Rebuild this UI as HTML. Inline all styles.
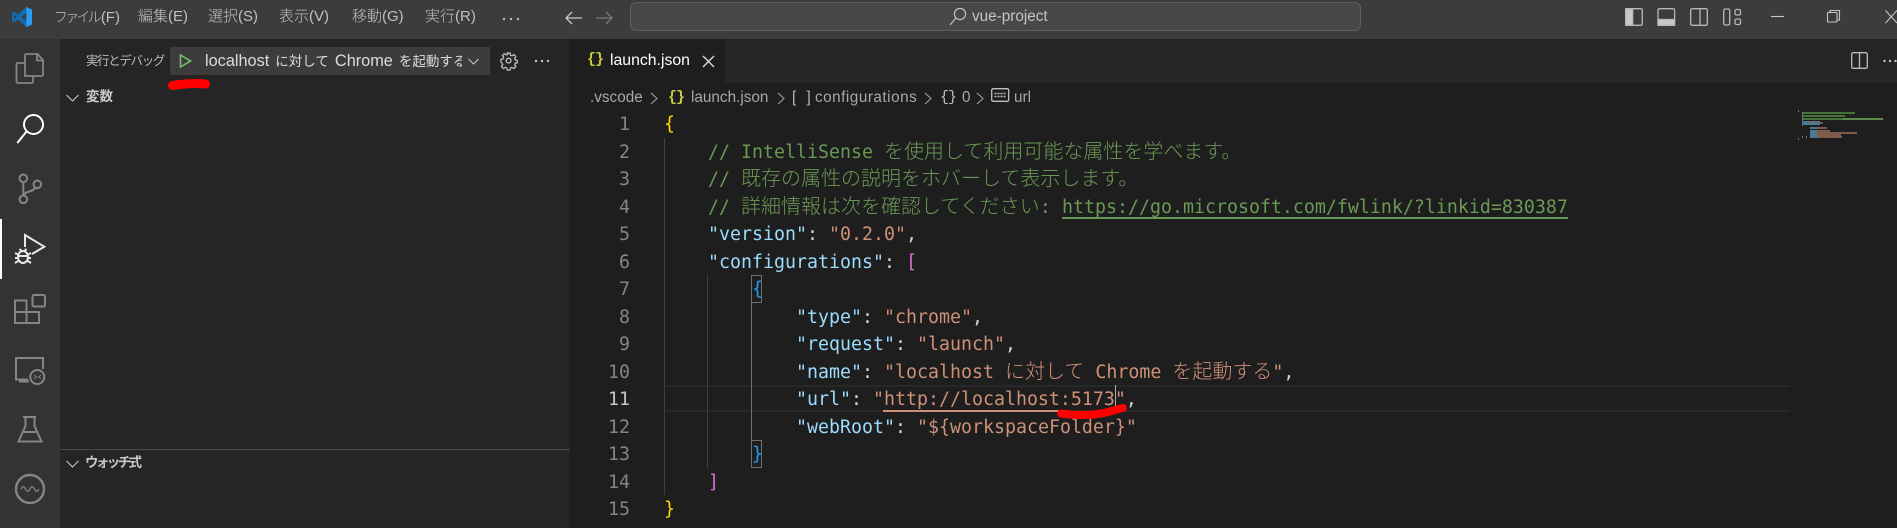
<!DOCTYPE html>
<html lang="ja"><head><meta charset="utf-8"><title>vue-project</title>
<style>
html,body{margin:0;padding:0;background:#1e1e1e}
#app{position:relative;width:1897px;height:528px;overflow:hidden;background:#1e1e1e;font-family:"Liberation Sans","Noto Sans CJK JP",sans-serif;color:#ccc}
.a{position:absolute;white-space:pre}
.ui{font-size:15.3px;line-height:22px;top:87px;color:#a8a8a8}
.m{font-size:15px;line-height:22px;top:6px;color:#c0c0c0;font-weight:300}
.ln{position:absolute;left:590px;width:40px;text-align:right;font:18.27px/27.5px "DejaVu Sans Mono",monospace;color:#858585}
.c{position:absolute;white-space:pre;font:18.27px/27.5px "DejaVu Sans Mono","Noto Sans CJK JP",monospace;color:#d4d4d4}
.c i{font-style:normal;font-family:"Noto Sans CJK JP",sans-serif;font-size:20px;font-weight:300;line-height:20px}
.k{color:#9cdcfe}.s{color:#ce9178}.g{color:#6a9955}.y{color:#ffd700}.p{color:#da70d6}.b{color:#179fff}
.r{position:absolute;background:#000}
svg{position:absolute;overflow:visible}
</style></head><body><div id="app">

<div class="r" style="left:0;top:0;width:1897px;height:39px;background:#3c3c3c"></div>
<div class="r" style="left:0;top:39px;width:60px;height:489px;background:#333"></div>
<div class="r" style="left:60px;top:39px;width:510px;height:489px;background:#252526"></div>
<div class="r" style="left:570px;top:39px;width:1327px;height:44px;background:#252526"></div>
<div class="r" style="left:570px;top:39px;width:155px;height:44px;background:#1e1e1e"></div>
<div class="r" style="left:0;top:219px;width:2px;height:60px;background:#fff"></div>

<!-- title bar -->
<svg style="left:12px;top:7px" width="20" height="20" viewBox="0 0 20 20">
<path fill="#0f6fb4" fill-rule="evenodd" d="M14.3 0 6 7.500 2 4.600 0 5.700v8.600l2 1.100 4-2.900 8.300 7.500 5.700-2.500V2.500zM14.500 6 9 10l5.500 4zM2 7.500v5L4.600 10z"/>
<path fill="#2a9df0" d="M14.300 0 20 2.500v15L14.300 20z"/>
</svg>
<div class="a m" style="left:54px"><span style="font-size:14px;letter-spacing:-2.800px">ファイル</span><span style="margin-left:2px">(F)</span></div>
<div class="a m" style="left:138px">編集(E)</div>
<div class="a m" style="left:208px">選択(S)</div>
<div class="a m" style="left:279px">表示(V)</div>
<div class="a m" style="left:352px">移動(G)</div>
<div class="a m" style="left:425px">実行(R)</div>
<svg style="left:502px;top:17px" width="18" height="4"><circle cx="2" cy="2" r="1.200" fill="#bbb"/><circle cx="9" cy="2" r="1.200" fill="#bbb"/><circle cx="16" cy="2" r="1.200" fill="#bbb"/></svg>
<svg style="left:564px;top:10px" width="50" height="16" fill="none" stroke-width="1.300"><path stroke="#c8c8c8" d="M18 8H2M8 2 2 8l6 6"/><path stroke="#7a7a7a" d="M32 8h16M42 2l6 6-6 6"/></svg>
<div class="r" style="left:630px;top:2px;width:731px;height:29px;box-sizing:border-box;background:#484848;border:1px solid #5e5e5e;border-radius:6px"></div>
<svg style="left:949px;top:7px" width="18" height="19" fill="none" stroke="#c0c0c0" stroke-width="1.200"><circle cx="11" cy="7" r="5.600"/><path d="M7 11 1 18"/></svg>
<div class="a" style="left:972px;top:6px;font-size:15.300px;line-height:21px;color:#c4c4c4">vue-project</div>

<svg style="left:1625px;top:8px" width="120" height="18" fill="none" stroke="#b8b8b8" stroke-width="1.300">
<rect x=".7" y=".7" width="16.600" height="16.600" rx="1.500"/><rect x=".7" y=".7" width="7" height="16.600" fill="#c8c8c8"/>
<rect x="33" y=".7" width="16.600" height="16.600" rx="1.500"/><rect x="33" y="11.500" width="16.600" height="5.800" fill="#c8c8c8"/>
<rect x="65.700" y=".7" width="16.600" height="16.600" rx="1.500"/><path d="M75 1v16"/>
<rect x="98.700" y="1" width="6" height="16" rx="1.500"/><rect x="110" y="1.500" width="5.500" height="5.500" rx="1.500"/><rect x="110" y="11" width="5.500" height="5.500" rx="1.500"/>
</svg>
<svg style="left:1771px;top:9px" width="126" height="16" fill="none" stroke="#c8c8c8" stroke-width="1.100">
<path d="M0 7.500h13"/>
<rect x="56.500" y="3.500" width="9.500" height="9.500" rx="1"/><path d="M59 3V1.500h9.500V11H66"/>
<path d="M114.500 1.500 126 14M126 1.500 114.500 14"/>
</svg>

<!-- activity bar -->
<svg style="left:0;top:39px" width="60" height="489" fill="none" stroke="#858585" stroke-width="1.800">
<path d="M24.500 24H17.500L16.500 25V43L17.500 44H32L33 43V37.500"/>
<path d="M25 37V16l1-1h11.500L43 21v15l-1 1z"/><path d="M37 15.500v6H43"/>
<circle cx="33.500" cy="85.500" r="9.500" stroke="#fff" stroke-width="2"/><path d="M26.500 92.500 17.300 104" stroke="#fff" stroke-width="2"/>
<g stroke-width="2"><circle cx="23.300" cy="139.300" r="3.800"/><circle cx="23.300" cy="160.300" r="3.800"/><circle cx="37.300" cy="145.300" r="3.800"/><path d="M23.300 143.300v13.200M35 148.800c-1 4-9 3-11.500 7"/></g>
<g stroke="#e8e8e8" stroke-width="2"><path d="M25 208V196L44.300 207.700 32 215"/>
<ellipse cx="23" cy="218" rx="5" ry="6" fill="#333"/><path d="M18 217h10M15 214l4 2M31 214l-4 2M15 219h3M31 219h-3M15 224l4-2.500M31 224l-4-2.500M19.500 210l2 2M26.500 210l-2 2"/></g>
<g stroke-width="2" transform="translate(0,-39)"><path d="M15 300.500h11.500V323H15zM15 312h24v11H26.500"/><rect x="32.500" y="295" width="12.500" height="11.500" rx="1.500"/></g>
<g stroke-width="2" transform="translate(0,-39)"><path d="M28 379.500H16V358h27v11"/><path d="M19 381.500h10"/><circle cx="37.300" cy="377" r="7"/><path d="M34 375l2.500 2-2.500 2M41 375l-2.500 2 2.500 2" stroke-width="1"/></g>
<g stroke-width="2" transform="translate(0,-39)"><path d="M23 417h13M25.500 417v9l-7 15.500h23l-7-15.500v-9M22 432h16"/></g>
<g stroke-width="2" transform="translate(0,-39)"><circle cx="30" cy="489" r="14" stroke-width="2.400"/><path d="M21 489c1.500-3 3-3 4.500 0s3 3 4.500 0 3-3 4.500 0 3 3 4.500 0" stroke-width="1.300"/></g>
</svg>

<!-- sidebar -->
<div class="a" style="left:86px;top:51px;font-size:12.400px;line-height:20px;color:#bdbdbd;letter-spacing:-1.250px">実行とデバッグ</div>
<div class="r" style="left:170px;top:47px;width:320px;height:28px;background:#3c3c3c"></div>
<svg style="left:179px;top:54px" width="13" height="14" fill="none" stroke="#73c06a" stroke-width="1.600"><path d="M1.500 1v12l10-6z"/></svg>
<div class="a" style="left:205px;top:50px;width:257px;overflow:hidden;font-size:16.300px;line-height:22px;color:#dcdcdc;word-spacing:1.500px">localhost <span style="font-size:13.500px">に対して</span> Chrome <span style="font-size:13.500px">を起動する</span></div>
<svg style="left:468px;top:58px" width="11" height="7" fill="none" stroke="#c8c8c8" stroke-width="1.100"><path d="M.5 1 5.500 6l5-5"/></svg>
<svg style="left:500px;top:52px" width="18" height="18" viewBox="0 0 18 18" fill="none" stroke="#bfc6cc" stroke-width="1.300"><circle cx="8.600" cy="8.600" r="2.400"/><path d="M7.500 1h3l.4 2.300 1.600.7 2-1.300 2 2-1.300 2 .7 1.600 2.100.4v2.600l-2.100.4-.7 1.600 1.300 2-2 2-2-1.300-1.600.7-.4 2.100h-3l-.4-2.100-1.600-.7-2 1.300-2-2 1.300-2-.7-1.600L1 10.300V7.700l2.100-.4.7-1.600-1.300-2 2-2 2 1.300 1.600-.7z" transform="scale(.96)"/></svg>
<svg style="left:534px;top:59px" width="16" height="4"><circle cx="2" cy="2" r="1.200" fill="#c4c4c4"/><circle cx="8" cy="2" r="1.200" fill="#c4c4c4"/><circle cx="14" cy="2" r="1.200" fill="#c4c4c4"/></svg>
<svg style="left:167px;top:78px" width="46" height="14"><path d="M5.500 7.500c10-1.500 23-2.500 33-1.500" fill="none" stroke="#f00" stroke-width="9" stroke-linecap="round"/></svg>

<svg style="left:66px;top:94px" width="13" height="8" fill="none" stroke="#c8c8c8" stroke-width="1.100"><path d="M.5 1 6.500 7l6-6"/></svg>
<div class="a" style="left:86px;top:87px;font-size:13.500px;line-height:20px;font-weight:700;color:#c8c8c8">変数</div>
<div class="r" style="left:60px;top:449px;width:510px;height:1px;background:#4a4a4a"></div>
<svg style="left:66px;top:460px" width="13" height="8" fill="none" stroke="#c8c8c8" stroke-width="1.100"><path d="M.5 1 6.500 7l6-6"/></svg>
<div class="a" style="left:85px;top:453px;font-size:13.500px;line-height:20px;font-weight:700;color:#c8c8c8;letter-spacing:-2.600px">ウォッチ式</div>

<!-- tab -->
<div class="a" style="left:587px;top:49px;font:700 15px/22px 'Liberation Mono',monospace;color:#cbcb41;letter-spacing:-1px">{}</div>
<div class="a" style="left:610px;top:50px;font-size:15.800px;line-height:22px;color:#fff">launch.json</div>
<svg style="left:702px;top:55px" width="13" height="13" fill="none" stroke="#ddd" stroke-width="1.300"><path d="M1 1l11 11M12 1 1 12"/></svg>
<svg style="left:1851px;top:52px" width="46" height="18" fill="none" stroke-width="1.300"><rect x=".7" y=".7" width="15.600" height="15.600" rx="1.500" stroke="#b4bcc4"/><path d="M8.500 1v15" stroke="#b4bcc4"/><circle cx="33.500" cy="9" r="1.200" fill="#c4c4c4" stroke="none"/><circle cx="39" cy="9" r="1.200" fill="#c4c4c4" stroke="none"/><circle cx="44.500" cy="9" r="1.200" fill="#c4c4c4" stroke="none"/></svg>

<!-- breadcrumbs -->
<div class="a ui" style="left:590px">.vscode</div>
<svg style="left:650px;top:92px" width="340" height="13" fill="none" stroke="#a0a0a0" stroke-width="1.100"><path d="M1 1l6 5.500-6 5.500M128 1l6 5.500-6 5.500M275 1l6 5.500-6 5.500M327 1l6 5.500-6 5.500"/></svg>
<div class="a" style="left:668px;top:87px;font:700 15px/22px 'Liberation Mono',monospace;color:#cbcb41;letter-spacing:-1px">{}</div>
<div class="a ui" style="left:691px">launch.json</div>
<div class="a ui" style="left:792px;color:#b8b8b8;letter-spacing:3px">[ ]</div>
<div class="a ui" style="left:815px;letter-spacing:.5px">configurations</div>
<div class="a" style="left:940px;top:87px;font:15px/22px 'Liberation Mono',monospace;color:#c0c0c0;letter-spacing:-1px">{}</div>
<div class="a ui" style="left:962px">0</div>
<svg style="left:991px;top:88px" width="19" height="15" fill="none"><rect x=".7" y=".7" width="17" height="12.600" rx="1.500" stroke="#c0c0c0" stroke-width="1.300"/><path d="M3.500 8.500h11M3.500 5.500h11" stroke="#b8b8b8" stroke-width="1.400" stroke-dasharray="2 1"/></svg>
<div class="a ui" style="left:1014px">url</div>

<!-- current line, guides -->
<div class="r" style="left:664px;top:385px;width:1126px;height:2px;background:#282828"></div>
<div class="r" style="left:664px;top:410px;width:1126px;height:2px;background:#282828"></div>
<div class="r" style="left:664px;top:138px;width:1px;height:357px;background:#404040"></div>
<div class="r" style="left:707px;top:275px;width:1px;height:193px;background:#404040"></div>
<div class="r" style="left:751px;top:275px;width:1px;height:193px;background:#707070"></div>
<div class="r" style="left:751px;top:275px;width:11px;height:28px;box-sizing:border-box;border:1px solid #707070;background:transparent"></div>
<div class="r" style="left:751px;top:440px;width:11px;height:28px;box-sizing:border-box;border:1px solid #707070;background:transparent"></div>

<!-- line numbers -->
<div class="ln" style="top:111.250px">1</div>
<div class="ln" style="top:138.750px">2</div>
<div class="ln" style="top:166.250px">3</div>
<div class="ln" style="top:193.750px">4</div>
<div class="ln" style="top:221.250px">5</div>
<div class="ln" style="top:248.750px">6</div>
<div class="ln" style="top:276.250px">7</div>
<div class="ln" style="top:303.750px">8</div>
<div class="ln" style="top:331.250px">9</div>
<div class="ln" style="top:358.750px">10</div>
<div class="ln" style="top:386.250px;color:#c6c6c6">11</div>
<div class="ln" style="top:413.750px">12</div>
<div class="ln" style="top:441.250px">13</div>
<div class="ln" style="top:468.750px">14</div>
<div class="ln" style="top:496.250px">15</div>

<!-- code -->
<div class="c y" style="left:664px;top:111.250px">{</div>
<div class="c g" style="left:708px;top:138.750px">// IntelliSense <i>を使用して利用可能な属性を学べます。</i></div>
<div class="c g" style="left:708px;top:166.250px">// <i>既存の属性の説明をホバーして表示します。</i></div>
<div class="c g" style="left:708px;top:193.750px">// <i>詳細情報は次を確認してください</i>: <span style="position:absolute;left:354px;text-decoration:underline;text-underline-offset:4px;text-decoration-thickness:2px">https://go.microsoft.com/fwlink/?linkid=830387</span></div>
<div class="c" style="left:708px;top:221.250px"><span class="k">"version"</span>: <span class="s">"0.2.0"</span>,</div>
<div class="c" style="left:708px;top:248.750px"><span class="k">"configurations"</span>: <span class="p">[</span></div>
<div class="c b" style="left:752px;top:276.250px">{</div>
<div class="c" style="left:796px;top:303.750px"><span class="k">"type"</span>: <span class="s">"chrome"</span>,</div>
<div class="c" style="left:796px;top:331.250px"><span class="k">"request"</span>: <span class="s">"launch"</span>,</div>
<div class="c" style="left:796px;top:358.750px"><span class="k">"name"</span>: <span class="s">"localhost <i>に対して</i> Chrome <i>を起動する</i>"</span>,</div>
<div class="c" style="left:796px;top:386.250px"><span class="k">"url"</span>: <span class="s">"http://localhost:5173"</span>,</div>
<div class="c" style="left:796px;top:413.750px"><span class="k">"webRoot"</span>: <span class="s">"${workspaceFolder}"</span></div>
<div class="c b" style="left:752px;top:441.250px">}</div>
<div class="c p" style="left:708px;top:468.750px">]</div>
<div class="c y" style="left:664px;top:496.250px">}</div>

<div class="r" style="left:883px;top:410px;width:180px;height:2px;background:#ce9178"></div>
<div class="r" style="left:1115px;top:385px;width:1px;height:26px;background:#aeafad"></div>
<svg style="left:1055px;top:402px" width="75" height="18"><path d="M6 11.500c14 2 28 2 40 0s14-4 22-5.500" fill="none" stroke="#f00" stroke-width="8" stroke-linecap="round"/></svg>

<!-- minimap -->
<svg style="left:1798px;top:110px" width="90" height="32" shape-rendering="crispEdges">
<g fill="#757575"><rect x="0" y="0" width="1" height="2"/><rect x="4" y="2" width="1" height="14"/><rect x="8" y="12" width="1" height="1"/><rect x="8" y="26" width="1" height="2"/><rect x="4" y="26" width="1" height="2"/><rect x="0" y="28" width="1" height="2"/></g>
<g fill="#46703a"><rect x="5" y="2" width="52" height="2"/><rect x="5" y="5" width="42" height="2"/><rect x="5" y="8" width="40" height="2"/></g>
<rect x="45" y="8" width="40" height="2" fill="#5b8a4c"/>
<rect x="4" y="11" width="18" height="2" fill="#4e7792"/><rect x="12" y="11" width="7" height="1" fill="#8a6350"/>
<rect x="4" y="13" width="18" height="2" fill="#4e7792"/><rect x="22" y="12" width="3" height="2" fill="#6a5a50"/>
<rect x="12" y="17" width="7" height="2" fill="#4e7792"/><rect x="19" y="17" width="10" height="2" fill="#7d5a49"/>
<rect x="12" y="20" width="7" height="2" fill="#4e7792"/><rect x="19" y="20" width="13" height="2" fill="#7d5a49"/>
<rect x="12" y="22" width="7" height="2" fill="#4e7792"/><rect x="19" y="22" width="40" height="2" fill="#7d5a49"/>
<rect x="12" y="24" width="7" height="2" fill="#4e7792"/><rect x="19" y="24" width="24" height="2" fill="#7d5a49"/>
<rect x="12" y="26" width="8" height="2" fill="#4e7792"/><rect x="20" y="26" width="24" height="2" fill="#7d5a49"/>
</svg>
</div></body></html>
